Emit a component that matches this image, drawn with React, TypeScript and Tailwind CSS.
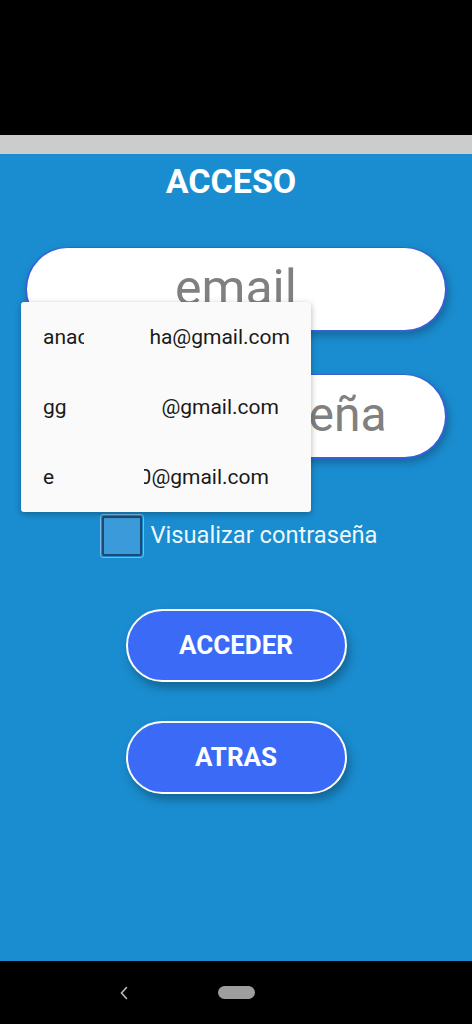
import React from "react";

const font = { fontFamily: "Roboto, 'Noto Sans', sans-serif" };

export default function App() {
  return (
    <div className="w-[472px] h-[1024px] flex flex-col bg-black overflow-hidden" style={font}>
      <div className="h-[135px] bg-black shrink-0" />
      <div className="h-[19px] bg-[#cccccc] shrink-0" />
      <main className="relative flex-1 bg-[#1a8dd0] flex flex-col items-center">
        <h1 className="mt-[7px] mr-[10px] h-[40px] leading-[40px] text-[34px] font-bold text-white">ACCESO</h1>

        <div className="mt-[46px] w-[422px] h-[85px] rounded-full bg-white border-2 border-t border-[#3760d8] shadow-[2px_4px_8px_rgba(0,0,0,0.25)] flex items-center justify-center">
          <span className="text-[50px] leading-none text-[#808080] pb-[2px]">email</span>
        </div>

        <div className="mt-[42px] w-[422px] h-[85px] rounded-full bg-white border-2 border-t border-[#3760d8] shadow-[2px_4px_8px_rgba(0,0,0,0.25)] flex items-center justify-center pl-[62px]">
          <span className="text-[48px] leading-none text-[#808080] pb-[2px]">contraseña</span>
        </div>

        <div className="mt-[55px] flex items-center gap-[6px] pl-[6px]">
          <div className="w-[44px] h-[44px] rounded-[3px] border border-[#79b8e6] p-px">
            <div className="w-full h-full rounded-[2px] border-2 border-[#1b4b72] bg-[#3b9ad9]" />
          </div>
          <span className="text-[23.7px] leading-none text-white/95">Visualizar contraseña</span>
        </div>

        <button className="mt-[51px] w-[221px] h-[73px] rounded-full bg-[#3b6bf6] border-2 border-white shadow-[3px_6px_10px_rgba(0,0,0,0.28)] text-white font-bold text-[26px] leading-none pb-[2px]">
          ACCEDER
        </button>
        <button className="mt-[39px] w-[221px] h-[73px] rounded-full bg-[#3b6bf6] border-2 border-white shadow-[3px_6px_10px_rgba(0,0,0,0.28)] text-white font-bold text-[26px] leading-none pb-[2px]">
          ATRAS
        </button>

        <div className="absolute left-[21px] top-[148px] w-[290px] bg-[#fafafa] rounded-[3px] shadow-[0_2px_6px_rgba(0,0,0,0.3)] flex flex-col text-[21px] text-[#1a1a1a] leading-none">
          <div className="h-[70px] flex items-center pl-[22px] pr-[21px] pt-[1px]">
            <span>ana<span className="inline-block w-[7px] overflow-hidden align-bottom">c</span></span>
            <span className="ml-auto">ha@gmail.com</span>
          </div>
          <div className="h-[70px] flex items-center pl-[22px] pr-[32px]">
            <span>gg</span>
            <span className="ml-auto">@gmail.com</span>
          </div>
          <div className="h-[70px] flex items-center pl-[22px] pr-[42px]">
            <span>e</span>
            <span className="ml-auto flex items-center">
              <span className="inline-flex w-[7px] overflow-hidden justify-end">0</span>@gmail.com
            </span>
          </div>
        </div>
      </main>
      <div className="h-[63px] bg-black shrink-0 flex items-center pl-[119px] gap-[89px]">
        <svg width="10" height="14" viewBox="0 0 10 14">
          <path d="M7.5 1.5 L2.5 7 L7.5 12.5" stroke="#bdbdbd" strokeWidth="1.6" fill="none" strokeLinecap="round" />
        </svg>
        <div className="w-[37px] h-[13px] rounded-full bg-[#9e9e9e]" />
      </div>
    </div>
  );
}
